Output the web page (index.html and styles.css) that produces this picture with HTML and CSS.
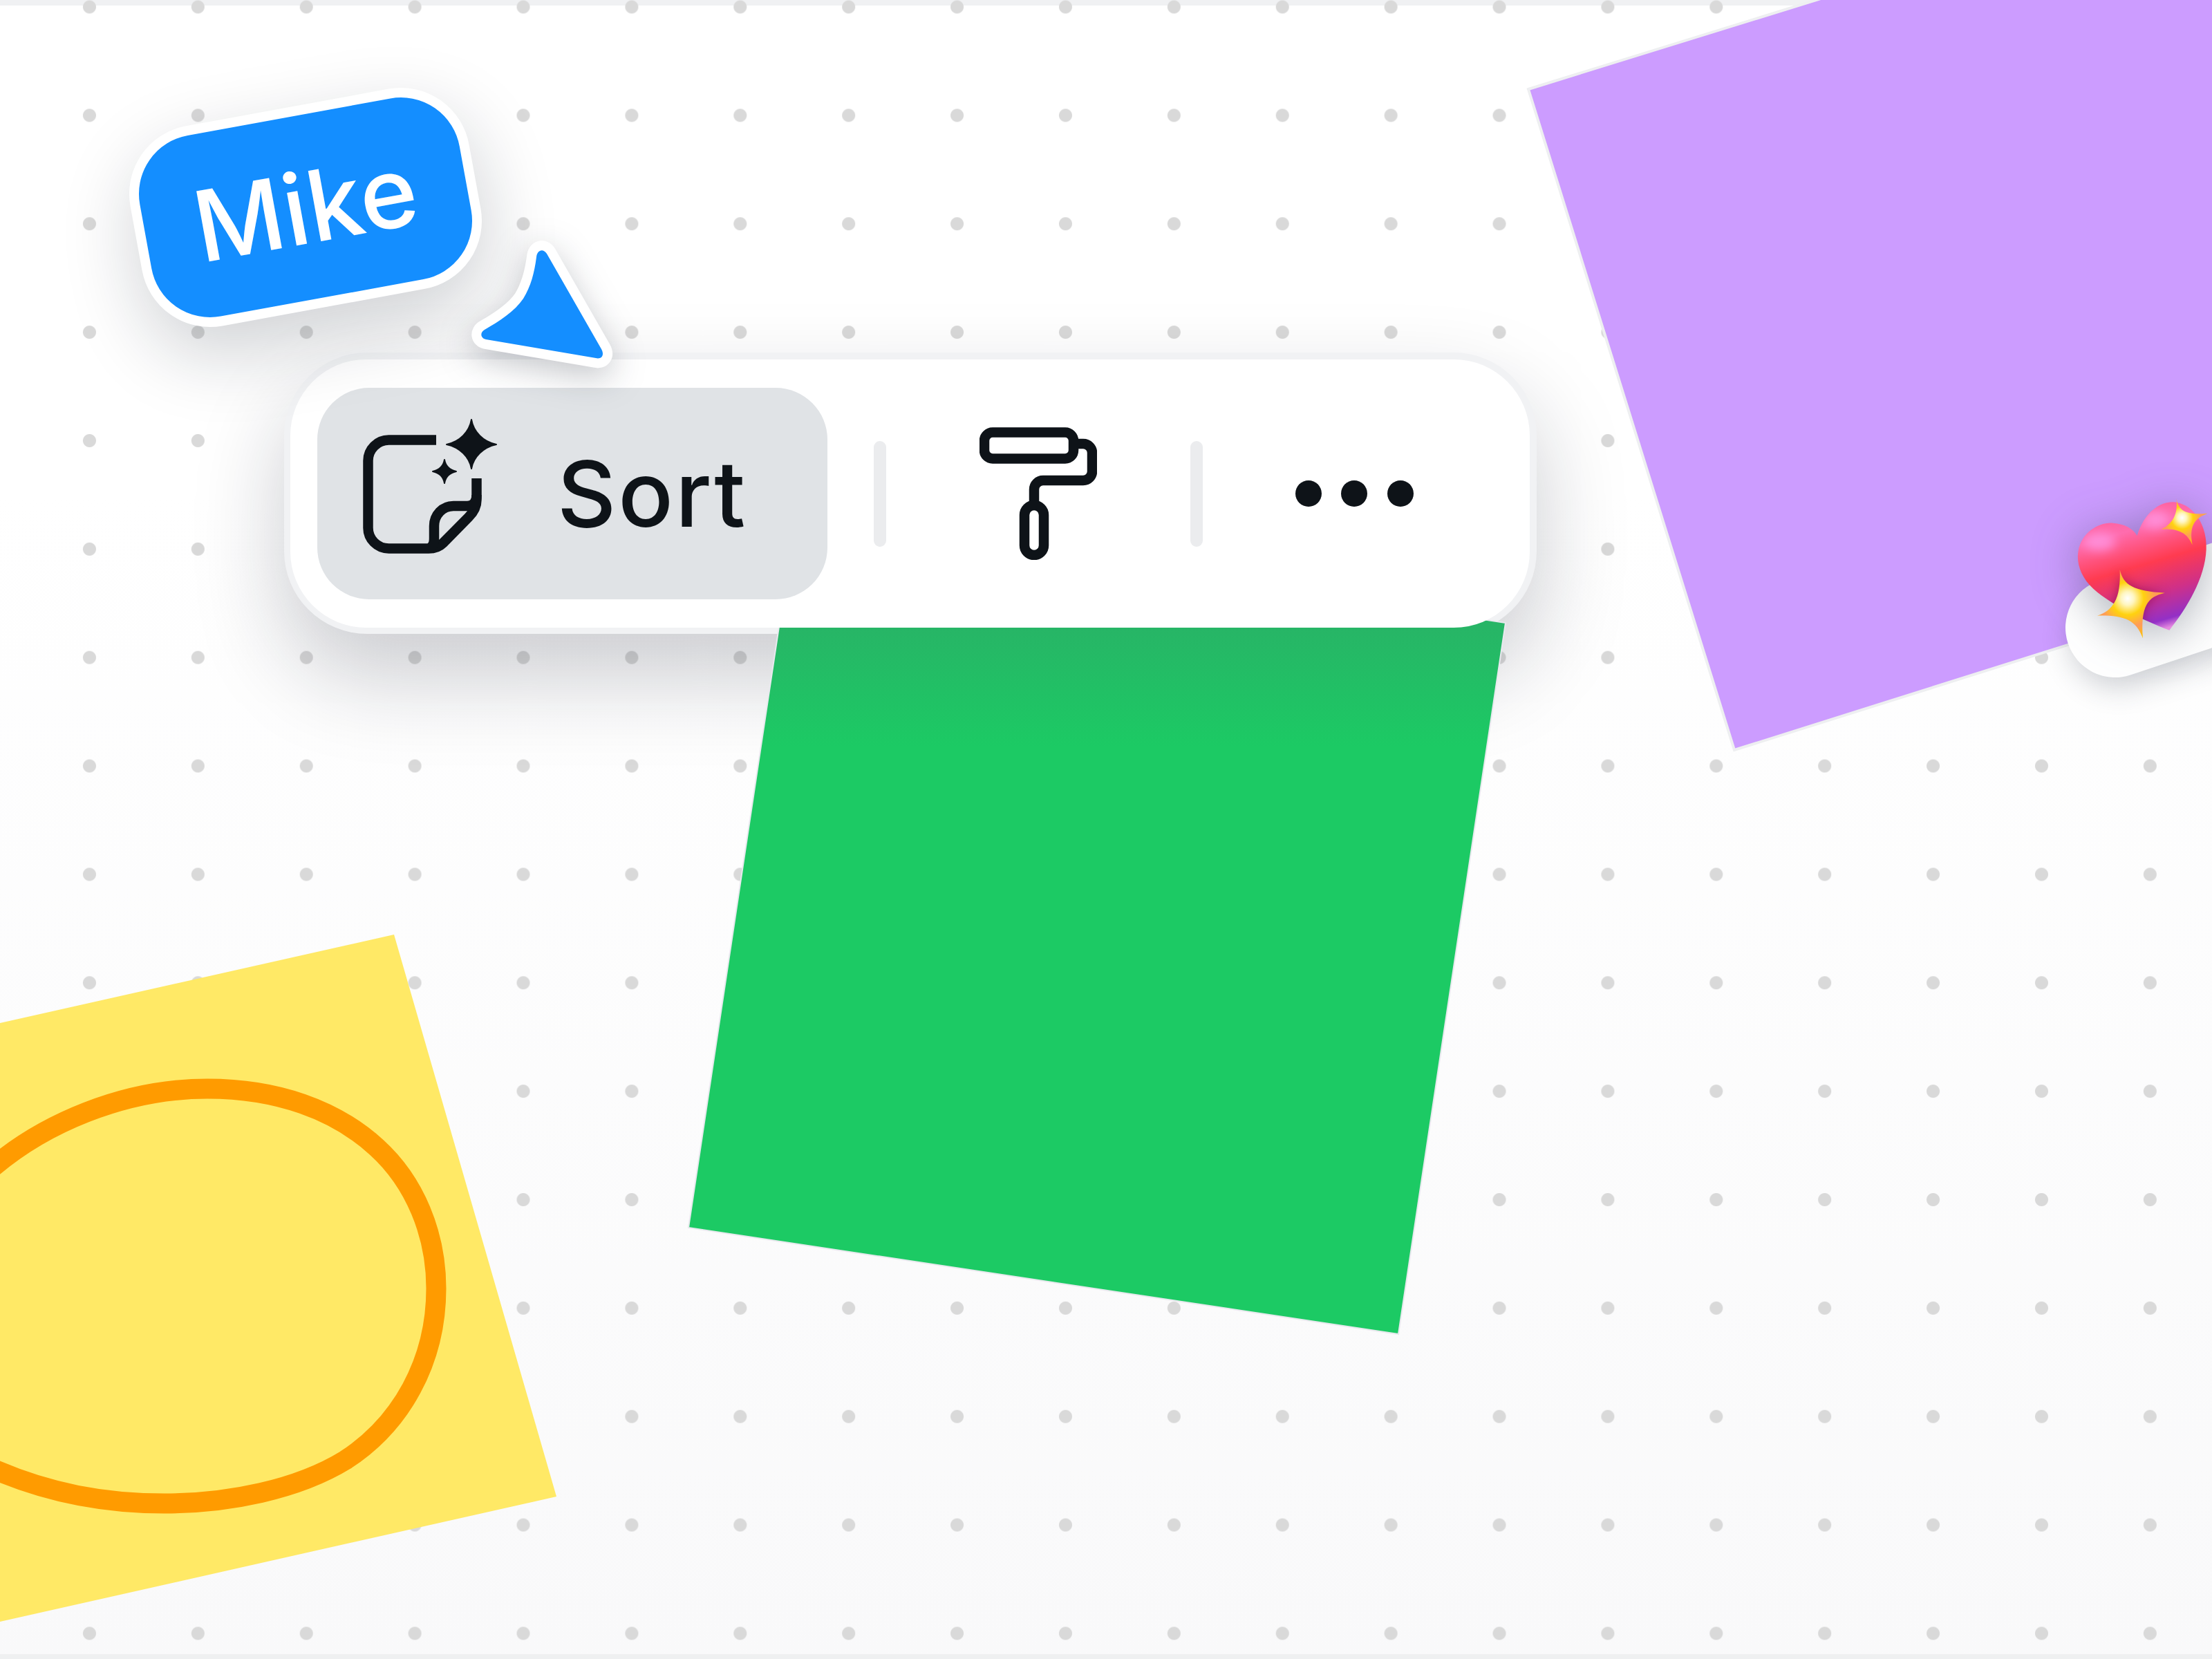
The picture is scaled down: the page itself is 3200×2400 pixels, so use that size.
FILE: index.html
```html
<!DOCTYPE html>
<html lang="en">

<head>
    <meta charset="UTF-8" />
    <title>Whiteboard</title>
    <link rel="stylesheet" href="styles.css">
</head>

<body>

    <div class="canvas">

        <svg class="shapes" viewBox="0 0 3200 2400" width="3200" height="2400">
            <polygon class="sticky-purple" points="2211,129 2634,-2 3204,-2 3204,866 2509,1085" />
            <polygon class="sticky-yellow" points="-4,1481 570,1352 805,2165 -4,2347" />
            <path class="ring"
                d="M-20 1697 C60 1625 180 1575 300 1575 C400 1575 485 1605 545 1660 C600 1710 631 1785 631 1864 C631 1970 580 2060 500 2112 C430 2155 330 2175 238 2175 C150 2175 70 2160 -10 2125" />
        </svg>

        <!-- ring and shadow of the toolbar sit under the green note, the white face over it -->
        <div class="toolbar-back"></div>

        <svg class="shapes" viewBox="0 0 3200 2400" width="3200" height="2400">
            <defs>
                <linearGradient id="greenFill" gradientUnits="userSpaceOnUse" x1="0" y1="908" x2="0" y2="1080">
                    <stop offset="0" stop-color="#27b566" />
                    <stop offset="1" stop-color="#1cca64" />
                </linearGradient>
            </defs>
            <polygon class="sticky-green" points="1151,747 2178,901 2023,1930 996,1776" />
        </svg>

        <div class="reaction-pill"></div>

        <svg class="heart" viewBox="0 0 900 1020" width="300" height="340">
            <defs>
                <linearGradient id="heartFill" gradientUnits="userSpaceOnUse" x1="530" y1="150" x2="690" y2="690">
                    <stop offset="0" stop-color="#ff5d98" />
                    <stop offset="0.2" stop-color="#ff6cae" />
                    <stop offset="0.48" stop-color="#ff3b50" />
                    <stop offset="0.72" stop-color="#cf3088" />
                    <stop offset="0.93" stop-color="#9330c6" />
                    <stop offset="1" stop-color="#e58ae0" />
                </linearGradient>
                <radialGradient id="sparkFill" cx="0.45" cy="0.42" r="0.6">
                    <stop offset="0" stop-color="#ffffff" />
                    <stop offset="0.16" stop-color="#fff6c0" />
                    <stop offset="0.4" stop-color="#ffd20f" />
                    <stop offset="0.7" stop-color="#ff9a5c" />
                    <stop offset="1" stop-color="#ffc400" />
                </radialGradient>
                <filter id="soft" x="-50%" y="-50%" width="200%" height="200%">
                    <feGaussianBlur stdDeviation="22" />
                </filter>
                <clipPath id="heartClip">
                    <path d="M575 285 C610 170 690 130 745 140 C830 155 880 250 875 345 C870 470 790 600 715 695 C600 650 470 590 385 515 C330 465 310 400 320 350 C335 270 410 225 470 230 C520 233 560 255 575 285 Z" />
                </clipPath>
            </defs>
            <path fill="url(#heartFill)" d="M575 285 C610 170 690 130 745 140 C830 155 880 250 875 345 C870 470 790 600 715 695 C600 650 470 590 385 515 C330 465 310 400 320 350 C335 270 410 225 470 230 C520 233 560 255 575 285 Z" />
            <g clip-path="url(#heartClip)">
                <ellipse class="heart-glow" cx="410" cy="310" rx="70" ry="38" filter="url(#soft)" />
                <ellipse class="heart-glow" cx="655" cy="215" rx="60" ry="38" filter="url(#soft)" />
                <path class="spark-shade" filter="url(#soft)" d="M500 432 C515 500 560 525 695 533 C620 550 590 590 600 730 C570 650 520 630 402 632 C470 610 505 560 500 432 Z" />
            </g>
            <path fill="url(#sparkFill)" d="M745 122 C755 180 790 195 880 188 C825 210 800 240 815 325 C790 270 755 255 680 257 C725 235 755 195 745 122 Z" />
            <path fill="url(#sparkFill)" d="M500 432 C515 500 560 525 695 533 C620 550 590 590 600 730 C570 650 520 630 402 632 C470 610 505 560 500 432 Z" />
        </svg>

        <div class="toolbar">
            <button class="tool tool-sort">
                <svg class="icon-sort" viewBox="525 605 194 195" width="194" height="195">
                    <path class="line" d="M631 635.5 H563 a30 30 0 0 0 -30.5 30.5 V762 a30 30 0 0 0 30 30.5 H620 c8 0 16 -3 21 -8 L678 747 c7 -7 11.5 -15 11.5 -25 V691" />
                    <path class="line" d="M620 792 c5 -1 8 -6 8 -14 V760 c0 -16 12 -29 28 -29 h20 c8 0 13.5 -6 13.5 -16" />
                    <path class="solid" d="M682 606 C685 624 699 638 718 642 C699 646 685 660 682 677 C679 660 665 646 646 642 C665 638 679 624 682 606 Z" />
                    <path class="solid" d="M643 664 C644.5 673 651 679 660 681 C651 683 644.5 689 643 698 C641.5 689 635 683 626 681 C635 679 641.5 673 643 664 Z" />
                </svg>
                <span class="tool-label">Sort</span>
            </button>
            <div class="separator"></div>
            <button class="tool tool-paint">
                <svg viewBox="1416 618 170 192" width="170" height="192">
                    <rect class="line" x="1423" y="625.5" width="129" height="38" rx="12" />
                    <path class="line" d="M1555 642 h11 a13 13 0 0 1 13 13 v27 a13 13 0 0 1 -13 13 h-58 a13 13 0 0 0 -13 13 v22" />
                    <rect class="line" x="1481" y="731" width="28" height="72" rx="14" />
                </svg>
            </button>
            <div class="separator"></div>
            <button class="tool tool-more">
                <span class="dot"></span>
                <span class="dot"></span>
                <span class="dot"></span>
            </button>
        </div>

        <div class="mike-tag">Mike</div>

        <svg class="cursor" viewBox="680 350 210 185" width="210" height="185">
            <path d="M776 372 C777 361 786 359 791 367 L870 505 C875 514 870 520 862 518 L703 491 C695 489 694 481 701 477 C722 465 745 450 757 432 C768 414 773 395 776 372 Z" />
        </svg>

    </div>

</body>

</html>
```

FILE: styles.css
```css
body {
    margin: 0;
    font-family: Inter, "Liberation Sans", sans-serif;
}

.canvas {
    position: relative;
    width: 3200px;
    height: 2400px;
    overflow: hidden;
    background-color: #ffffff;
    background-image:
        radial-gradient(circle at center, #d9d9d9 9px, transparent 10px),
        linear-gradient(#f0f1f3, #f0f1f3),
        linear-gradient(#eff0f1, #eff0f1),
        linear-gradient(#ffffff 30%, #f9f9fa 100%);
    background-size: 156.9px 156.87px, 100% 8px, 100% 7px, 100% 100%;
    background-position: 51px -68.4px, 0 0, 0 100%, 0 0;
    background-repeat: repeat, no-repeat, no-repeat, no-repeat;
}

.shapes {
    position: absolute;
    top: 0;
    left: 0;
}

.sticky-purple {
    fill: #cc9cff;
    stroke: #eeeff1;
    stroke-width: 4;
}

.sticky-green {
    fill: url(#greenFill);
    stroke: #e8e9ee;
    stroke-width: 2;
}

.sticky-yellow {
    fill: #ffe966;
}

.ring {
    fill: none;
    stroke: #ff9b00;
    stroke-width: 29;
}

/* reaction in the corner */
.reaction-pill {
    position: absolute;
    left: 2988px;
    top: 836px;
    width: 420px;
    height: 144px;
    border-radius: 72px;
    background: #ffffff;
    transform: rotate(-18.4deg);
    transform-origin: 72px 72px;
    box-shadow: 0 16px 40px rgb(40 50 70 / 0.22);
}

.heart {
    position: absolute;
    left: 2900px;
    top: 680px;
    overflow: visible;
    filter: drop-shadow(0 10px 34px rgb(50 60 80 / 0.4));
}

.heart-glow {
    fill: #ff8ed8;
}

.spark-shade {
    fill: #7a1040;
    opacity: 0.55;
}

/* toolbar */
.toolbar-back {
    position: absolute;
    left: 411px;
    top: 510px;
    box-sizing: border-box;
    width: 1812px;
    height: 407px;
    background: #f1f2f4;
    border-radius: 120px;
    box-shadow: 0 60px 130px rgb(16 24 40 / 0.22);
}

.toolbar {
    position: absolute;
    left: 420px;
    top: 520px;
    display: flex;
    align-items: center;
    box-sizing: border-box;
    width: 1793px;
    height: 388px;
    padding: 41px 34px 41px 39px;
    background: #ffffff;
    border-radius: 110px;
}

.tool {
    display: flex;
    align-items: center;
    justify-content: center;
    height: 306px;
    padding: 0;
    border: none;
    background: none;
    font-family: inherit;
    color: #0e1318;
}

.tool-sort {
    justify-content: flex-start;
    width: 738px;
    padding-left: 66px;
    box-sizing: border-box;
    gap: 87px;
    background: #e0e3e6;
    border-radius: 75px;
    margin-right: 67px;
}

.icon-sort {
    margin-bottom: 22px;
}

.tool-label {
    font-size: 132px;
    font-weight: 500;
    letter-spacing: 3px;
}

.tool-paint {
    width: 440px;
}

.tool-more {
    width: 438px;
    gap: 28.5px;
}

.dot {
    width: 38px;
    height: 38px;
    border-radius: 50%;
    background: #0e1318;
}

.separator {
    flex: none;
    width: 18px;
    height: 153px;
    border-radius: 9px;
    background: #ebecee;
}

.line {
    fill: none;
    stroke: #0e1318;
    stroke-width: 14.5;
}

.solid {
    fill: #0e1318;
    stroke: #0e1318;
    stroke-width: 2;
    stroke-linejoin: round;
}

/* collaborator cursor */
.mike-tag {
    position: absolute;
    left: 193px;
    top: 153px;
    display: flex;
    align-items: center;
    justify-content: center;
    box-sizing: border-box;
    width: 498px;
    height: 294px;
    background: #148eff;
    border: 14px solid #ffffff;
    border-radius: 100px;
    color: #ffffff;
    font-size: 142px;
    font-weight: 500;
    transform: rotate(-10.35deg);
    box-shadow: 0 40px 110px rgb(16 24 40 / 0.2);
}

.cursor {
    position: absolute;
    left: 680px;
    top: 350px;
    overflow: visible;
    filter: drop-shadow(0 14px 24px rgb(16 24 40 / 0.25));
}

.cursor path {
    fill: #148eff;
    stroke: #ffffff;
    stroke-width: 28;
    stroke-linejoin: round;
    paint-order: stroke;
}
```
